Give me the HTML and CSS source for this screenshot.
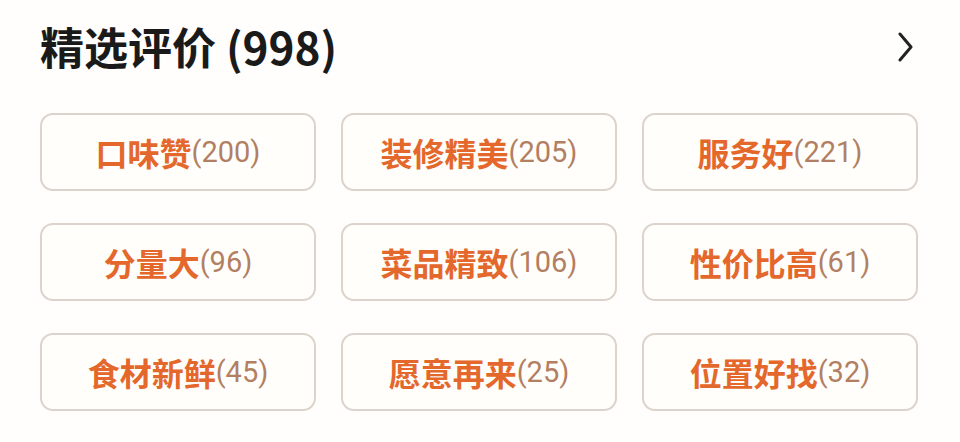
FILE: index.html
```html
<!DOCTYPE html>
<html lang="zh-CN">
<head>
  <meta charset="UTF-8" />
  <meta name="viewport" content="width=device-width, initial-scale=1" />
  <title>精选评价</title>
  <link rel="stylesheet" href="styles.css">
</head>
<body>
  <section class="reviews">
    <div class="reviews-head">
      <h1 class="reviews-title">精选评价 (998)</h1>
      <svg class="more" width="18" height="30" viewBox="0 0 18 30">
        <polyline points="3,2 14,15 3,28" fill="none" stroke="#222" stroke-width="3" stroke-linecap="round" stroke-linejoin="round" />
      </svg>
    </div>

    <div class="tags">
      <a class="tag">口味赞<span class="count">(200)</span></a>
      <a class="tag">装修精美<span class="count">(205)</span></a>
      <a class="tag">服务好<span class="count">(221)</span></a>
      <a class="tag">分量大<span class="count">(96)</span></a>
      <a class="tag">菜品精致<span class="count">(106)</span></a>
      <a class="tag">性价比高<span class="count">(61)</span></a>
      <a class="tag">食材新鲜<span class="count">(45)</span></a>
      <a class="tag">愿意再来<span class="count">(25)</span></a>
      <a class="tag">位置好找<span class="count">(32)</span></a>
    </div>
  </section>
</body>
</html>
```

FILE: styles.css
```css
body { margin: 0; background: #fffefc; font-family: "Noto Sans CJK SC", "Liberation Sans", sans-serif; }
.reviews { padding: 18px 40px 0 40px; }
.reviews-head { display: flex; align-items: center; justify-content: space-between; height: 56px; margin-bottom: 39px; }
.reviews-title { margin: 0; font-size: 44px; font-weight: 700; color: #1a1a1a; line-height: 56px; }
.more { margin-right: 5px; margin-top: 2px; }
.tags { display: grid; grid-template-columns: repeat(3, 276px); column-gap: 25px; row-gap: 32px; }
.tag { display: flex; align-items: center; justify-content: center; height: 78px; box-sizing: border-box; border: 2px solid #dcd3cc; border-radius: 13px; background: #fffefb; color: #e4682b; font-size: 32px; font-weight: 700; }
.count { font-family: "Roboto", "Liberation Sans", sans-serif; font-weight: 400; font-size: 29px; color: #b27f62; }
```
